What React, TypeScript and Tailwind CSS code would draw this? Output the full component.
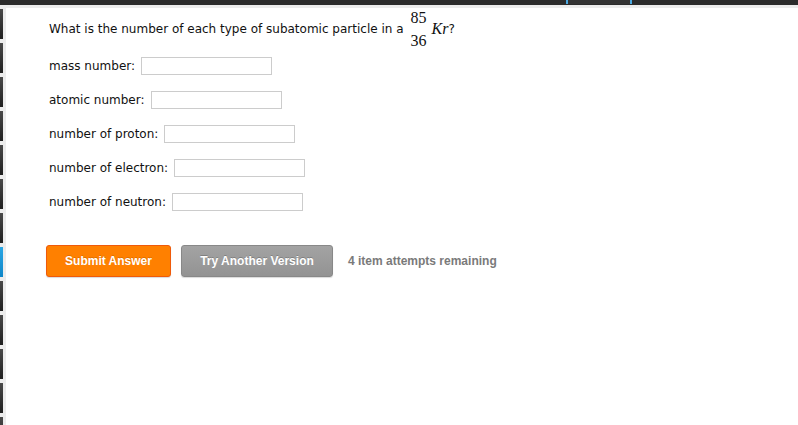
import React from 'react';

const rows = [
  { label: 'mass number:', width: 'w-[131px]' },
  { label: 'atomic number:', width: 'w-[131px]' },
  { label: 'number of proton:', width: 'w-[131px]' },
  { label: 'number of electron:', width: 'w-[131px]' },
  { label: 'number of neutron:', width: 'w-[131px]' },
];

// left rail tabs; the 8th one is the selected (blue) one
const tabs = Array.from({ length: 13 }, (_, i) => i === 7);

export default function App() {
  return (
    <div className="flex h-[425px] w-full flex-col overflow-hidden bg-white font-['DejaVu_Sans',Verdana,sans-serif] text-[12px] text-[#111]">
      <div className="flex h-[5px] shrink-0 bg-[#2b2b2b]">
        <div className="ml-[566px] h-[4px] w-[66px] border-x-2 border-[#4aa8e0] bg-[#333]" />
      </div>
      <div className="h-[3px] shrink-0 bg-[#ececec]" />

      <div className="flex min-h-0 flex-1">
        <div className="flex w-[6px] shrink-0 flex-col bg-[#ececec] pt-[1px]">
          {tabs.map((active, i) => (
            <div
              key={i}
              className={`mb-[4px] h-[30px] w-[3px] shrink-0 ${
                active
                  ? 'bg-gradient-to-b from-[#2aa6e4] to-[#0c86c8]'
                  : 'bg-gradient-to-b from-[#4a4a4a] to-[#1f1f1f]'
              }`}
            />
          ))}
        </div>

        <div className="flex-1 pl-[43px]">
          <div className="flex h-[41px] items-center pt-[1px]">
            <span>What is the number of each type of subatomic particle in a</span>
            <span className="ml-[7px] flex flex-col items-center font-['Liberation_Serif',serif] text-[16px] leading-[14px]">
              <span>85</span>
              <span className="mt-[9px]">36</span>
            </span>
            <span className="ml-[5px] font-['Liberation_Serif',serif] text-[16px] italic">Kr</span>
            <span>?</span>
          </div>

          <div className="mt-[8px] flex flex-col gap-[16px]">
            {rows.map((r) => (
              <div key={r.label} className="flex h-[18px] items-center">
                <span>{r.label}</span>
                <input
                  type="text"
                  className={`ml-[6px] h-[18px] ${r.width} border border-[#cccccc] bg-white outline-none`}
                />
              </div>
            ))}
          </div>

          <div className="ml-[-3px] mt-[34px] flex items-center font-['Liberation_Sans',Arial,sans-serif] text-[12px] font-bold">
            <button className="h-[32px] w-[125px] rounded-[3px] border border-[#ef5a0a] bg-[#ff8000] text-white shadow-[0_1px_1px_rgba(0,0,0,0.15)] [text-shadow:0_-1px_0_rgba(0,0,0,0.15)]">
              Submit Answer
            </button>
            <button className="ml-[10px] h-[32px] w-[152px] rounded-[3px] border border-[#888] bg-gradient-to-b from-[#a3a3a3] to-[#939393] text-white shadow-[0_1px_1px_rgba(0,0,0,0.15)] [text-shadow:0_-1px_0_rgba(0,0,0,0.2)]">
              Try Another Version
            </button>
            <span className="ml-[15px] text-[#7a7a7a]">4 item attempts remaining</span>
          </div>
        </div>
      </div>
    </div>
  );
}
